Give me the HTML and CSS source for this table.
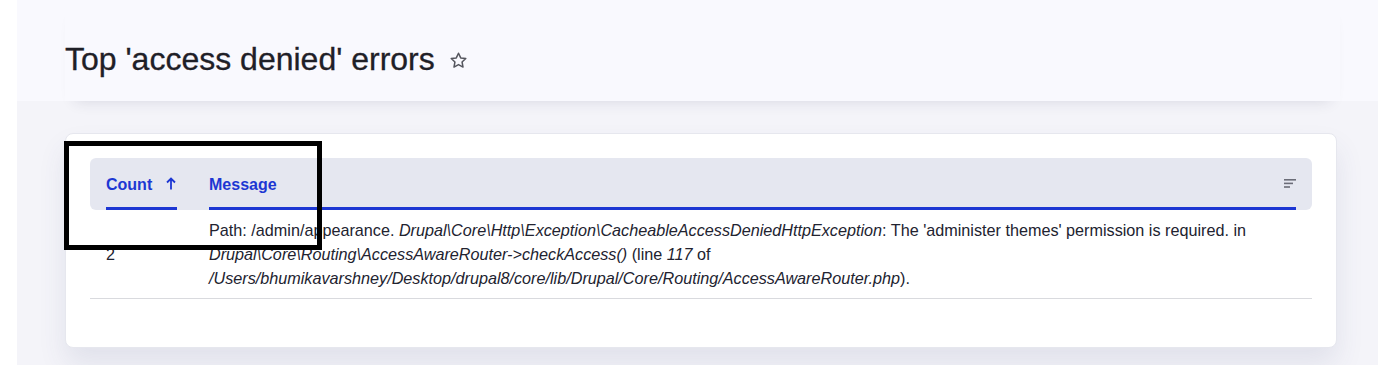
FILE: index.html
```html
<!DOCTYPE html>
<html>
<head>
<meta charset="utf-8">
<link rel="stylesheet" href="styles.css">
</head>
<body>
<div class="main">
  <header class="page-header">
    <div class="header-inner">
      <h1 class="title">Top 'access denied' errors</h1>
      <svg class="star" width="19" height="19" viewBox="0 0 24 24" fill="none" stroke="#55565e" stroke-width="1.9" stroke-linejoin="round"><path d="M12 2.8l2.8 5.9 6.4.8-4.7 4.4 1.2 6.4L12 17.2l-5.7 3.1 1.2-6.4-4.7-4.4 6.4-.8z"/></svg>
    </div>
  </header>
  <section class="content">
    <div class="card">
      <table class="table">
        <thead>
          <tr>
            <th class="col-count"><span class="th-inner">Count <svg class="arrow" width="10" height="13" viewBox="0 0 10 13" fill="none" stroke="#1d37d3" stroke-width="1.8"><path d="M5 12.5V1.5M1 5.5l4-4 4 4"/></svg></span></th>
            <th class="col-message"><span class="th-inner th-msg"><span>Message</span>
              <svg class="filter" width="12" height="9" viewBox="0 0 12 9"><rect x="0" y="0" width="12" height="1.6" fill="#6b6d78"/><rect x="0" y="3.6" width="9" height="1.6" fill="#6b6d78"/><rect x="0" y="7.2" width="6" height="1.6" fill="#6b6d78"/></svg></span></th>
          </tr>
        </thead>
        <tbody>
          <tr>
            <td class="cell-count">2</td>
            <td class="cell-message">Path: /admin/appearance. <em>Drupal\Core\Http\Exception\CacheableAccessDeniedHttpException</em>: The 'administer themes' permission is required. in <em>Drupal\Core\Routing\AccessAwareRouter-&gt;checkAccess()</em> (line <em>117</em> of <em>/Users/bhumikavarshney/Desktop/drupal8/core/lib/Drupal/Core/Routing/AccessAwareRouter.php</em>).</td>
          </tr>
        </tbody>
      </table>
      <div class="highlight"></div>
    </div>
  </section>
</div>
</body>
</html>
```

FILE: styles.css
```css
* { box-sizing: border-box; }
html, body { margin: 0; padding: 0; background: #ffffff; }
body {
  font-family: "Liberation Sans", Arial, sans-serif;
  color: #222330;
  padding-left: 17px;
  height: 365px;
  overflow: hidden;
}
.main {
  background: #f4f4f9;
  height: 365px;
}
.page-header {
  background: #f9f9fe;
}
.header-inner {
  margin: 0 38px 0 48px;
  height: 101px;
  display: flex;
  align-items: center;
  gap: 14px;
  padding-top: 18px;
  box-shadow: 0 10px 14px -10px rgba(40, 40, 80, 0.14);
  background: #f9f9fe;
}
.title {
  margin: 0;
  font-size: 32px;
  font-weight: 400;
  color: #1f2027;
  letter-spacing: 0;
  -webkit-text-stroke: 0.3px #1f2027;
}
.star { display: block; margin-top: 2px; }
.content {
  padding: 32px 41px 0 48px;
}
.card {
  position: relative;
  background: #ffffff;
  border: 1px solid #e6e7ee;
  border-radius: 8px;
  padding: 24px 24px 48px 24px;
  box-shadow: 0 16px 28px rgba(60, 70, 120, 0.10);
}
.table {
  width: 100%;
  border-collapse: collapse;
}
thead th {
  background: #e5e7f0;
  height: 52px;
  padding: 0 16px;
  text-align: left;
  vertical-align: bottom;
  font-size: 16px;
  font-weight: 700;
  color: #1d37d3;
}
thead th.col-count { border-radius: 6px 0 0 6px; width: 103px; }
thead th.col-message { border-radius: 0 6px 6px 0; }
.th-inner {
  display: flex;
  align-items: center;
  height: 50px;
  padding-top: 2px;
  border-bottom: 3px solid #1d37d3;
}
.arrow {
  display: block;
  margin-left: 14px;
  margin-top: -2px;
}
.th-msg { justify-content: space-between; }
.filter { display: block; margin-top: -3px; }
tbody td {
  padding: 8px 16px;
  font-size: 16.2px;
  line-height: 24px;
  border-bottom: 1px solid #d9dade;
  vertical-align: middle;
  color: #222330;
}
.cell-count { padding-left: 16px; }
.highlight {
  position: absolute;
  left: -2px;
  top: 7px;
  width: 258px;
  height: 109px;
  border: 5px solid #000;
}
```
